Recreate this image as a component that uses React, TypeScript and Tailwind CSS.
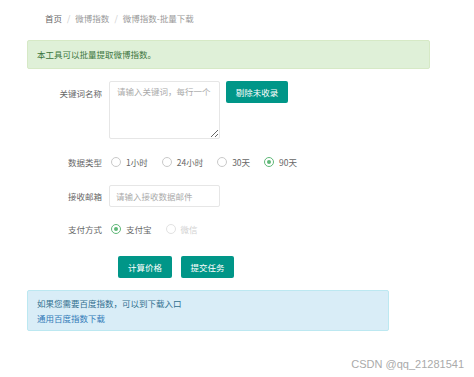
import React from 'react';

const font = { fontFamily: '"Noto Sans CJK SC", "Liberation Sans", sans-serif' };

function Radio({ label, checked, disabled }: { label: string; checked?: boolean; disabled?: boolean }) {
  return (
    <div className="flex items-center">
      <span
        className={
          'w-[10px] h-[10px] rounded-full border flex items-center justify-center ' +
          (checked ? 'border-[#5fb878]' : disabled ? 'border-[#e2e2e2]' : 'border-[#c9c9c9]')
        }
      >
        {checked && <span className="w-[4px] h-[4px] rounded-full bg-[#5fb878]" />}
      </span>
      <span className={'ml-[5px] ' + (disabled ? 'text-[#d2d2d2]' : 'text-[#666]')}>{label}</span>
    </div>
  );
}

export default function App() {
  return (
    <div className="relative w-[474px] h-[377px] bg-white text-[8.5px] overflow-hidden" style={font}>
      <nav className="flex items-center pl-[45px] pt-[12px] h-[24px] leading-[12px] text-[#999]">
        <span className="text-[#666]">首页</span>
        <span className="mx-[5px] text-[#ccc]">/</span>
        <span>微博指数</span>
        <span className="mx-[5px] text-[#ccc]">/</span>
        <span>微博指数-批量下载</span>
      </nav>

      <div className="mt-[16px] ml-[27px] w-[403px] h-[29px] flex items-center px-[9px] bg-[#dff0d8] border border-[#d6e9c6] text-[#3c763d] rounded-[2px]">
        本工具可以批量提取微博指数。
      </div>

      <div className="flex flex-col text-[#666]">
        <div className="flex items-start mt-[12px]">
          <div className="w-[102px] h-[24px] self-start flex items-center justify-end">关键词名称</div>
          <textarea
            className="ml-[7px] w-[111px] h-[58px] border border-[#e6e6e6] rounded-[2px] px-[7px] py-[3px] leading-[12px] outline-none placeholder:text-[#aaa]"
            placeholder="请输入关键词，每行一个"
          />
          <button className="ml-[6px] w-[62px] h-[22px] bg-[#009688] text-white rounded-[2px]">剔除未收录</button>
        </div>

        <div className="flex items-center mt-[12px] h-[22px]">
          <div className="w-[102px] text-right">数据类型</div>
          <div className="ml-[9px] flex items-center gap-[14px]">
            <Radio label="1小时" />
            <Radio label="24小时" />
            <Radio label="30天" />
            <Radio label="90天" checked />
          </div>
        </div>

        <div className="flex items-center mt-[12px] h-[22px]">
          <div className="w-[102px] text-right">接收邮箱</div>
          <input
            className="ml-[7px] w-[111px] h-[22px] border border-[#e6e6e6] rounded-[2px] px-[6px] outline-none placeholder:text-[#aaa]"
            placeholder="请输入接收数据邮件"
          />
        </div>

        <div className="flex items-center mt-[11px] h-[22px]">
          <div className="w-[102px] text-right">支付方式</div>
          <div className="ml-[9px] flex items-center gap-[14px]">
            <Radio label="支付宝" checked />
            <Radio label="微信" disabled />
          </div>
        </div>

        <div className="flex mt-[16px] pl-[118px] gap-[9px]">
          <button className="w-[54px] h-[22px] bg-[#009688] text-white rounded-[2px]">计算价格</button>
          <button className="w-[53px] h-[22px] bg-[#009688] text-white rounded-[2px]">提交任务</button>
        </div>
      </div>

      <div className="mt-[12px] ml-[27px] w-[362px] h-[41px] px-[9px] py-[5px] leading-[15px] bg-[#d9edf7] border border-[#bce8f1] text-[#31708f] rounded-[2px]">
        <div>如果您需要百度指数，可以到下载入口</div>
        <a className="text-[#337ab7]">通用百度指数下载</a>
      </div>

      <div
        className="absolute right-[10px] top-[357px] text-[11px] leading-[14px] text-[#aaa]"
        style={{ fontFamily: '"Liberation Sans", sans-serif' }}
      >
        CSDN @qq_21281541
      </div>
    </div>
  );
}
